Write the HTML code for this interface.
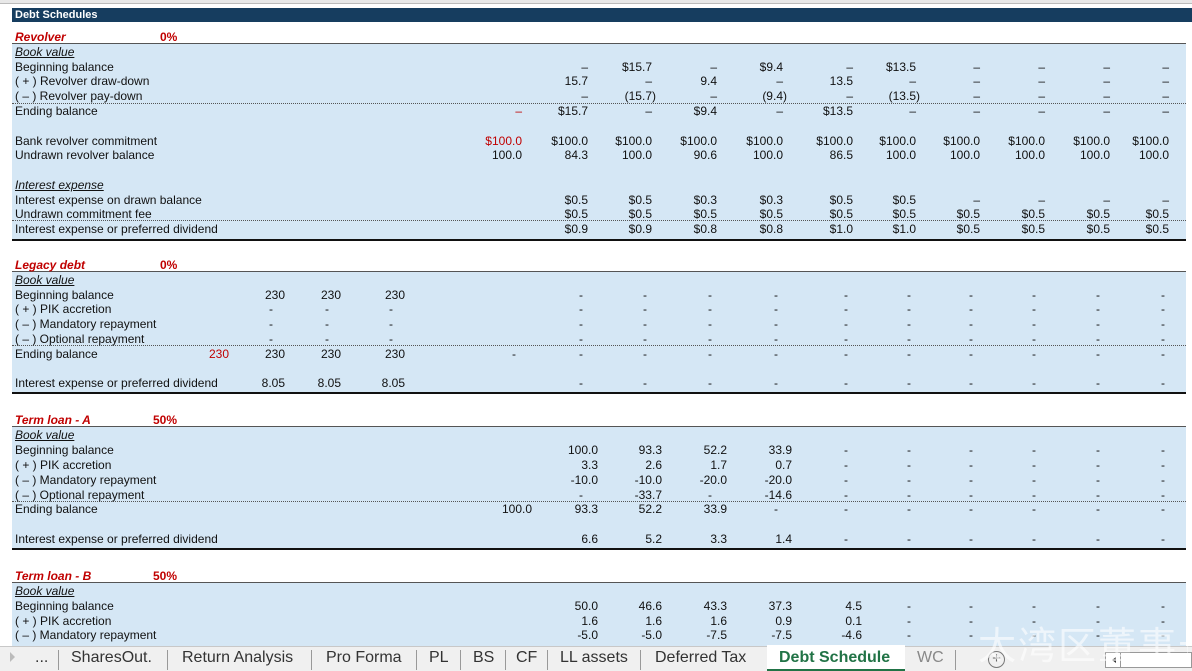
<!DOCTYPE html><html><head><meta charset="utf-8"><style>
*{margin:0;padding:0;box-sizing:border-box}
html{width:1192px;height:671px;overflow:hidden}
body{width:1192px;height:671px;overflow:hidden;background:#fff;position:relative;font-family:"Liberation Sans",sans-serif;font-size:12px;color:#111}
.a{position:absolute}
.band{position:absolute;left:12px;width:1174px;background:#d5e7f5}
.r{position:absolute;left:0;width:1192px;height:15px;line-height:17px}
.r span{position:absolute;width:60px;text-align:right;white-space:nowrap}
.r span.l{left:15px;width:auto;text-align:left}
.red{color:#c00000}
.t{font-weight:bold;font-style:italic;color:#c00000}
.p{font-weight:bold;color:#c00000}
.u{font-style:italic;text-decoration:underline}
.tl{position:absolute;left:12px;width:1174px;height:1px;background:#555}
.th{position:absolute;left:12px;width:1174px;height:2px;background:#111}
.dt{position:absolute;left:12px;width:1174px;border-top:1px dotted #555}
.tab{position:absolute;top:646px;height:25px;line-height:24px;font-family:"Liberation Sans Narrow","Liberation Sans",sans-serif;font-size:16px;color:#333}
.sep{position:absolute;top:650px;width:1px;height:20px;background:#999}
</style></head><body>
<div class="a" style="left:0;top:0;width:1192px;height:4px;background:#e8e8e8;border-bottom:1px solid #bbb"></div>
<div class="a" style="left:12px;top:8px;width:1180px;height:14px;background:#163d5f;color:#fff;font-weight:bold;font-size:11px;line-height:14px;padding-left:3px">Debt Schedules</div>

<div class="band" style="top:44px;height:195px"></div>
<div class="tl" style="top:43px"></div>
<div class="dt" style="top:103px"></div>
<div class="dt" style="top:220px"></div>
<div class="th" style="top:239px"></div>
<div class="r" style="top:29px"><span class="l t">Revolver</span><span class="p" style="left:160px;text-align:left">0%</span></div>
<div class="r" style="top:44px"><span class="l u">Book value</span></div>
<div class="r" style="top:59px"><span class="l">Beginning balance</span><span style="left:528px">–</span><span style="left:592px">$15.7</span><span style="left:657px">–</span><span style="left:723px">$9.4</span><span style="left:793px">–</span><span style="left:856px">$13.5</span><span style="left:920px">–</span><span style="left:985px">–</span><span style="left:1050px">–</span><span style="left:1109px">–</span></div>
<div class="r" style="top:73px"><span class="l">( + ) Revolver draw-down</span><span style="left:528px">15.7</span><span style="left:592px">–</span><span style="left:657px">9.4</span><span style="left:723px">–</span><span style="left:793px">13.5</span><span style="left:856px">–</span><span style="left:920px">–</span><span style="left:985px">–</span><span style="left:1050px">–</span><span style="left:1109px">–</span></div>
<div class="r" style="top:88px"><span class="l">( – ) Revolver pay-down</span><span style="left:528px">–</span><span style="left:596px">(15.7)</span><span style="left:657px">–</span><span style="left:727px">(9.4)</span><span style="left:793px">–</span><span style="left:860px">(13.5)</span><span style="left:920px">–</span><span style="left:985px">–</span><span style="left:1050px">–</span><span style="left:1109px">–</span></div>
<div class="r" style="top:103px"><span class="l">Ending balance</span><span class="red" style="left:462px">–</span><span style="left:528px">$15.7</span><span style="left:592px">–</span><span style="left:657px">$9.4</span><span style="left:723px">–</span><span style="left:793px">$13.5</span><span style="left:856px">–</span><span style="left:920px">–</span><span style="left:985px">–</span><span style="left:1050px">–</span><span style="left:1109px">–</span></div>
<div class="r" style="top:133px"><span class="l">Bank revolver commitment</span><span class="red" style="left:462px">$100.0</span><span style="left:528px">$100.0</span><span style="left:592px">$100.0</span><span style="left:657px">$100.0</span><span style="left:723px">$100.0</span><span style="left:793px">$100.0</span><span style="left:856px">$100.0</span><span style="left:920px">$100.0</span><span style="left:985px">$100.0</span><span style="left:1050px">$100.0</span><span style="left:1109px">$100.0</span></div>
<div class="r" style="top:147px"><span class="l">Undrawn revolver balance</span><span style="left:462px">100.0</span><span style="left:528px">84.3</span><span style="left:592px">100.0</span><span style="left:657px">90.6</span><span style="left:723px">100.0</span><span style="left:793px">86.5</span><span style="left:856px">100.0</span><span style="left:920px">100.0</span><span style="left:985px">100.0</span><span style="left:1050px">100.0</span><span style="left:1109px">100.0</span></div>
<div class="r" style="top:177px"><span class="l u">Interest expense</span></div>
<div class="r" style="top:192px"><span class="l">Interest expense on drawn balance</span><span style="left:528px">$0.5</span><span style="left:592px">$0.5</span><span style="left:657px">$0.3</span><span style="left:723px">$0.3</span><span style="left:793px">$0.5</span><span style="left:856px">$0.5</span><span style="left:920px">–</span><span style="left:985px">–</span><span style="left:1050px">–</span><span style="left:1109px">–</span></div>
<div class="r" style="top:206px"><span class="l">Undrawn commitment fee</span><span style="left:528px">$0.5</span><span style="left:592px">$0.5</span><span style="left:657px">$0.5</span><span style="left:723px">$0.5</span><span style="left:793px">$0.5</span><span style="left:856px">$0.5</span><span style="left:920px">$0.5</span><span style="left:985px">$0.5</span><span style="left:1050px">$0.5</span><span style="left:1109px">$0.5</span></div>
<div class="r" style="top:221px"><span class="l">Interest expense or preferred dividend</span><span style="left:528px">$0.9</span><span style="left:592px">$0.9</span><span style="left:657px">$0.8</span><span style="left:723px">$0.8</span><span style="left:793px">$1.0</span><span style="left:856px">$1.0</span><span style="left:920px">$0.5</span><span style="left:985px">$0.5</span><span style="left:1050px">$0.5</span><span style="left:1109px">$0.5</span></div>

<div class="band" style="top:272px;height:120px"></div>
<div class="tl" style="top:271px"></div>
<div class="dt" style="top:345px"></div>
<div class="th" style="top:392px"></div>
<div class="r" style="top:257px"><span class="l t">Legacy debt</span><span class="p" style="left:160px;text-align:left">0%</span></div>
<div class="r" style="top:272px"><span class="l u">Book value</span></div>
<div class="r" style="top:287px"><span class="l">Beginning balance</span><span style="left:225px">230</span><span style="left:281px">230</span><span style="left:345px">230</span><span style="left:523px">-</span><span style="left:587px">-</span><span style="left:652px">-</span><span style="left:718px">-</span><span style="left:788px">-</span><span style="left:851px">-</span><span style="left:913px">-</span><span style="left:976px">-</span><span style="left:1040px">-</span><span style="left:1105px">-</span></div>
<div class="r" style="top:301px"><span class="l">( + ) PIK accretion</span><span style="left:213px">-</span><span style="left:269px">-</span><span style="left:333px">-</span><span style="left:523px">-</span><span style="left:587px">-</span><span style="left:652px">-</span><span style="left:718px">-</span><span style="left:788px">-</span><span style="left:851px">-</span><span style="left:913px">-</span><span style="left:976px">-</span><span style="left:1040px">-</span><span style="left:1105px">-</span></div>
<div class="r" style="top:316px"><span class="l">( – ) Mandatory repayment</span><span style="left:213px">-</span><span style="left:269px">-</span><span style="left:333px">-</span><span style="left:523px">-</span><span style="left:587px">-</span><span style="left:652px">-</span><span style="left:718px">-</span><span style="left:788px">-</span><span style="left:851px">-</span><span style="left:913px">-</span><span style="left:976px">-</span><span style="left:1040px">-</span><span style="left:1105px">-</span></div>
<div class="r" style="top:331px"><span class="l">( – ) Optional repayment</span><span style="left:213px">-</span><span style="left:269px">-</span><span style="left:333px">-</span><span style="left:523px">-</span><span style="left:587px">-</span><span style="left:652px">-</span><span style="left:718px">-</span><span style="left:788px">-</span><span style="left:851px">-</span><span style="left:913px">-</span><span style="left:976px">-</span><span style="left:1040px">-</span><span style="left:1105px">-</span></div>
<div class="r" style="top:346px"><span class="l">Ending balance</span><span class="red" style="left:169px">230</span><span style="left:225px">230</span><span style="left:281px">230</span><span style="left:345px">230</span><span style="left:456px">-</span><span style="left:523px">-</span><span style="left:587px">-</span><span style="left:652px">-</span><span style="left:718px">-</span><span style="left:788px">-</span><span style="left:851px">-</span><span style="left:913px">-</span><span style="left:976px">-</span><span style="left:1040px">-</span><span style="left:1105px">-</span></div>
<div class="r" style="top:375px"><span class="l">Interest expense or preferred dividend</span><span style="left:225px">8.05</span><span style="left:281px">8.05</span><span style="left:345px">8.05</span><span style="left:523px">-</span><span style="left:587px">-</span><span style="left:652px">-</span><span style="left:718px">-</span><span style="left:788px">-</span><span style="left:851px">-</span><span style="left:913px">-</span><span style="left:976px">-</span><span style="left:1040px">-</span><span style="left:1105px">-</span></div>

<div class="band" style="top:427px;height:121px"></div>
<div class="tl" style="top:426px"></div>
<div class="dt" style="top:501px"></div>
<div class="th" style="top:548px"></div>
<div class="r" style="top:412px"><span class="l t">Term loan - A</span><span class="p" style="left:153px;text-align:left">50%</span></div>
<div class="r" style="top:427px"><span class="l u">Book value</span></div>
<div class="r" style="top:442px"><span class="l">Beginning balance</span><span style="left:538px">100.0</span><span style="left:602px">93.3</span><span style="left:667px">52.2</span><span style="left:732px">33.9</span><span style="left:788px">-</span><span style="left:851px">-</span><span style="left:913px">-</span><span style="left:976px">-</span><span style="left:1040px">-</span><span style="left:1105px">-</span></div>
<div class="r" style="top:457px"><span class="l">( + ) PIK accretion</span><span style="left:538px">3.3</span><span style="left:602px">2.6</span><span style="left:667px">1.7</span><span style="left:732px">0.7</span><span style="left:788px">-</span><span style="left:851px">-</span><span style="left:913px">-</span><span style="left:976px">-</span><span style="left:1040px">-</span><span style="left:1105px">-</span></div>
<div class="r" style="top:472px"><span class="l">( – ) Mandatory repayment</span><span style="left:538px">-10.0</span><span style="left:602px">-10.0</span><span style="left:667px">-20.0</span><span style="left:732px">-20.0</span><span style="left:788px">-</span><span style="left:851px">-</span><span style="left:913px">-</span><span style="left:976px">-</span><span style="left:1040px">-</span><span style="left:1105px">-</span></div>
<div class="r" style="top:487px"><span class="l">( – ) Optional repayment</span><span style="left:523px">-</span><span style="left:602px">-33.7</span><span style="left:652px">-</span><span style="left:732px">-14.6</span><span style="left:788px">-</span><span style="left:851px">-</span><span style="left:913px">-</span><span style="left:976px">-</span><span style="left:1040px">-</span><span style="left:1105px">-</span></div>
<div class="r" style="top:501px"><span class="l">Ending balance</span><span style="left:472px">100.0</span><span style="left:538px">93.3</span><span style="left:602px">52.2</span><span style="left:667px">33.9</span><span style="left:718px">-</span><span style="left:788px">-</span><span style="left:851px">-</span><span style="left:913px">-</span><span style="left:976px">-</span><span style="left:1040px">-</span><span style="left:1105px">-</span></div>
<div class="r" style="top:531px"><span class="l">Interest expense or preferred dividend</span><span style="left:538px">6.6</span><span style="left:602px">5.2</span><span style="left:667px">3.3</span><span style="left:732px">1.4</span><span style="left:788px">-</span><span style="left:851px">-</span><span style="left:913px">-</span><span style="left:976px">-</span><span style="left:1040px">-</span><span style="left:1105px">-</span></div>

<div class="band" style="top:583px;height:63px"></div>
<div class="tl" style="top:582px"></div>
<div class="r" style="top:568px"><span class="l t">Term loan - B</span><span class="p" style="left:153px;text-align:left">50%</span></div>
<div class="r" style="top:583px"><span class="l u">Book value</span></div>
<div class="r" style="top:598px"><span class="l">Beginning balance</span><span style="left:538px">50.0</span><span style="left:602px">46.6</span><span style="left:667px">43.3</span><span style="left:732px">37.3</span><span style="left:802px">4.5</span><span style="left:851px">-</span><span style="left:913px">-</span><span style="left:976px">-</span><span style="left:1040px">-</span><span style="left:1105px">-</span></div>
<div class="r" style="top:613px"><span class="l">( + ) PIK accretion</span><span style="left:538px">1.6</span><span style="left:602px">1.6</span><span style="left:667px">1.6</span><span style="left:732px">0.9</span><span style="left:802px">0.1</span><span style="left:851px">-</span><span style="left:913px">-</span><span style="left:976px">-</span><span style="left:1040px">-</span><span style="left:1105px">-</span></div>
<div class="r" style="top:627px"><span class="l">( – ) Mandatory repayment</span><span style="left:538px">-5.0</span><span style="left:602px">-5.0</span><span style="left:667px">-7.5</span><span style="left:732px">-7.5</span><span style="left:802px">-4.6</span><span style="left:851px">-</span><span style="left:913px">-</span><span style="left:976px">-</span><span style="left:1040px">-</span><span style="left:1105px">-</span></div>

<div class="a" style="left:0;top:646px;width:1192px;height:25px;background:#f0f0f0;border-top:1px solid #c8c8c8"></div>
<div class="a" style="left:10px;top:652px;width:0;height:0;border-left:5px solid #bbb;border-top:5px solid transparent;border-bottom:5px solid transparent"></div>
<div class="tab" style="left:35px">...</div>
<div class="sep" style="left:58px"></div>
<div class="tab" style="left:71px">SharesOut.</div>
<div class="sep" style="left:167px"></div>
<div class="tab" style="left:182px">Return Analysis</div>
<div class="sep" style="left:311px"></div>
<div class="tab" style="left:326px">Pro Forma</div>
<div class="sep" style="left:416px"></div>
<div class="tab" style="left:429px">PL</div>
<div class="sep" style="left:460px"></div>
<div class="tab" style="left:473px">BS</div>
<div class="sep" style="left:505px"></div>
<div class="tab" style="left:516px">CF</div>
<div class="sep" style="left:547px"></div>
<div class="tab" style="left:560px">LL assets</div>
<div class="sep" style="left:640px"></div>
<div class="tab" style="left:655px">Deferred Tax</div>
<div class="a" style="left:767px;top:645px;width:138px;height:26px;background:#fff;border-bottom:2px solid #217346"></div>
<div class="tab" style="left:779px;color:#217346;font-weight:bold">Debt Schedule</div>
<div class="tab" style="left:917px;color:#888">WC</div>
<div class="sep" style="left:955px"></div>
<div class="a" style="left:988px;top:651px;width:17px;height:17px;border:1px solid #777;border-radius:50%;text-align:center;line-height:14px;font-size:15px;color:#666">+</div>
<div class="a" style="left:1105px;top:652px;width:87px;height:16px;background:#fff;border:1px solid #999"></div>
<div class="a" style="left:1112px;top:657px;width:0;height:0;border-right:4px solid #333;border-top:3px solid transparent;border-bottom:3px solid transparent"></div>
<div class="a" style="left:1120px;top:652px;width:1px;height:16px;background:#999"></div>
<div class="a" style="left:978px;top:618px;width:210px;height:52px;overflow:hidden;white-space:nowrap;font-family:'Noto Sans CJK SC',sans-serif;font-size:38px;line-height:50px;color:rgba(255,255,255,0.6);letter-spacing:2px">太湾区董事长</div>
</body></html>
